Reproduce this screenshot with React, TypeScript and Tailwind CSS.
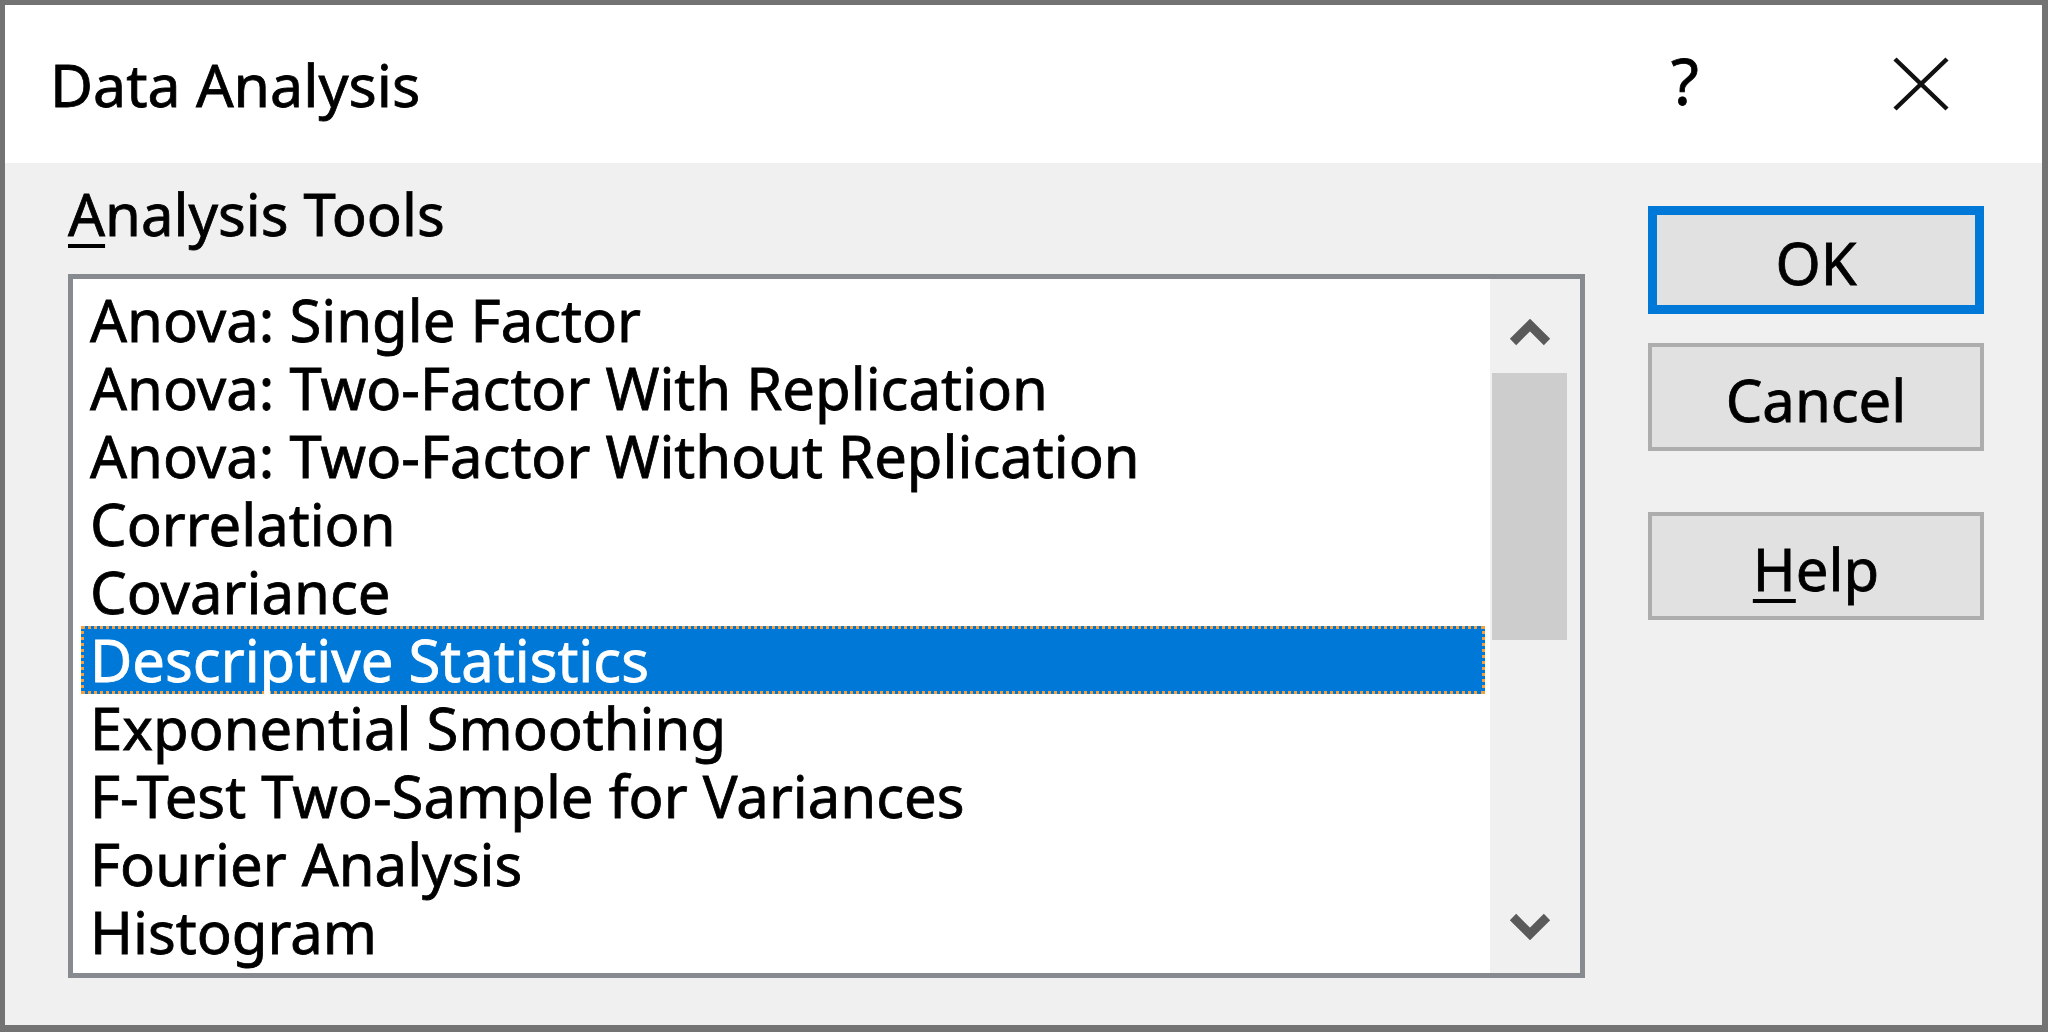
const tools = [
  "Anova: Single Factor",
  "Anova: Two-Factor With Replication",
  "Anova: Two-Factor Without Replication",
  "Correlation",
  "Covariance",
  "Descriptive Statistics",
  "Exponential Smoothing",
  "F-Test Two-Sample for Variances",
  "Fourier Analysis",
  "Histogram",
]

const selected = "Descriptive Statistics"

function Chevron({ up }: { up?: boolean }) {
  return (
    <svg width="42" height="28" viewBox="0 0 42 28" className={up ? "" : "rotate-180"}>
      <path d="M4 24 L21 7 L38 24" fill="none" stroke="#5a5a5a" strokeWidth="9" strokeLinejoin="miter" />
    </svg>
  )
}

export default function App() {
  return (
    <div className="flex h-[1032px] w-[2048px] flex-col overflow-hidden border-[5px] border-b-[7px] border-r-[6px] border-[#737373] bg-[#f0f0f0] font-['Noto_Sans',sans-serif] text-black [-webkit-text-stroke-width:0.8px]">
      {/* title bar */}
      <div className="flex h-[158px] shrink-0 items-center bg-white pl-[45px] pr-[93px]">
        <span className="text-[59px] leading-none">Data Analysis</span>
        <span className="-mt-[6px] ml-auto w-[26px] text-[64px] leading-none">?</span>
        <svg width="56" height="54" viewBox="0 0 56 54" className="ml-[196px]">
          <path d="M2 2 L54 52 M54 2 L2 52" stroke="#111" strokeWidth="4.5" />
        </svg>
      </div>

      <div className="flex flex-1 pl-[63px]">
        {/* left: list */}
        <div className="flex flex-col pt-[17px]">
          <div className="text-[58px] leading-[68px]">
            <span className="underline decoration-[4px] underline-offset-[8px]">A</span>nalysis Tools
          </div>
          <div className="mt-[26px] flex h-[704px] w-[1517px] border-[5px] border-[#878a8f]">
            <div className="flex-1 bg-white pt-[7px]">
              {tools.map((t) => (
                <div
                  key={t}
                  className={
                    t === selected
                      ? "ml-[8px] mr-[5px] h-[68px] border-[3px] border-dotted border-[#f5a03c] bg-[#0078d7] pl-[6px] text-[58px] leading-[62px] whitespace-nowrap text-white"
                      : "ml-[8px] mr-[5px] h-[68px] border-[3px] border-transparent pl-[6px] text-[58px] leading-[62px] whitespace-nowrap"
                  }
                >
                  {t}
                </div>
              ))}
            </div>
            <div className="flex w-[90px] flex-col bg-[#f0f0f0]">
              <div className="flex h-[94px] w-[79px] items-center justify-center pt-[12px]">
                <Chevron up />
              </div>
              <div className="ml-[2px] h-[267px] w-[75px] bg-[#cdcdcd]" />
              <div className="flex-1" />
              <div className="flex h-[92px] w-[79px] items-center justify-center">
                <Chevron />
              </div>
            </div>
          </div>
        </div>

        {/* right: buttons */}
        <div className="ml-[63px] flex w-[336px] flex-col pt-[43px]">
          <button className="flex h-[108px] items-center justify-center border-[9px] border-[#0078d7] bg-[#e1e1e1] pt-[5px] text-[58px] leading-none">
            OK
          </button>
          <button className="mt-[29px] flex h-[108px] items-center justify-center border-[4px] border-[#adadad] bg-[#e1e1e1] pt-[5px] text-[58px] leading-none">
            Cancel
          </button>
          <button className="mt-[61px] flex h-[108px] items-center justify-center border-[4px] border-[#adadad] bg-[#e1e1e1] pt-[5px] text-[58px] leading-none">
            <span>
              <span className="underline decoration-[4px] underline-offset-[8px]">H</span>elp
            </span>
          </button>
        </div>
      </div>
    </div>
  )
}
